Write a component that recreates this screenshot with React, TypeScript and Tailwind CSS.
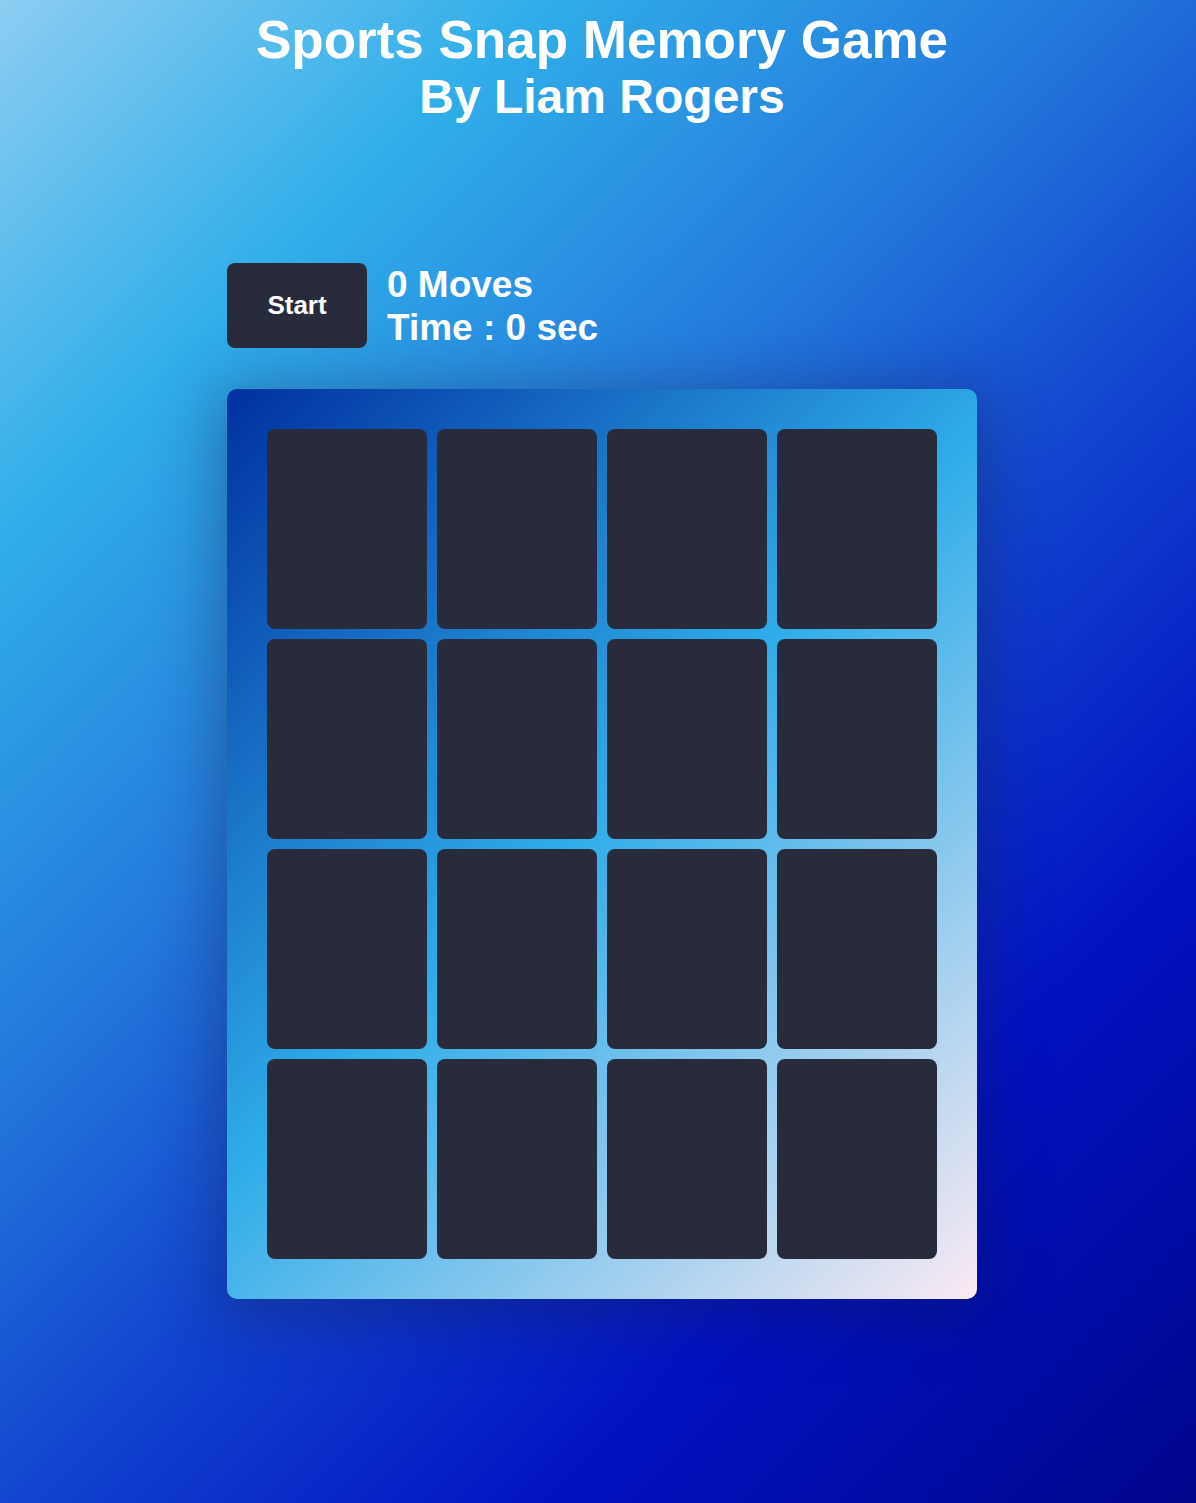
const cards = Array.from({ length: 16 }, (_, i) => i)

export default function App() {
  return (
    <div className="min-h-[1503px] w-full bg-[linear-gradient(135deg,#8ccdf2_0%,#30aee9_20%,#2479dc_40%,#1245cf_56%,#0212c2_76%,#00058a_100%)] font-['Liberation_Sans',Arial,sans-serif] text-white">
      <div className="flex flex-col items-center pl-2">
        <header className="pt-[9px] text-center font-bold">
          <h1 className="text-[53px] leading-[61px]">Sports Snap Memory Game</h1>
          <h2 className="text-[48px] leading-[54px]">By Liam Rogers</h2>
        </header>

        <div className="mt-[139px] flex w-[750px] items-start gap-5">
          <button className="h-[85px] w-[140px] rounded-lg bg-[#282b3c] text-[26px] font-bold text-white">
            Start
          </button>
          <div className="text-[37px] font-bold leading-[43px]">
            <div>0 Moves</div>
            <div>Time : 0 sec</div>
          </div>
        </div>

        <section className="mt-10 w-[750px] rounded-[10px] bg-[linear-gradient(135deg,#0030a0_0%,#2fade9_48%,#fbeaf3_100%)] p-10 shadow-[0_10px_60px_10px_rgba(20,30,70,0.35)]">
          <div className="grid grid-cols-4 gap-[10px]">
            {cards.map((c) => (
              <div key={c} className="h-[200px] w-[160px] rounded-lg bg-[#282b3c]" />
            ))}
          </div>
        </section>
      </div>
    </div>
  )
}
